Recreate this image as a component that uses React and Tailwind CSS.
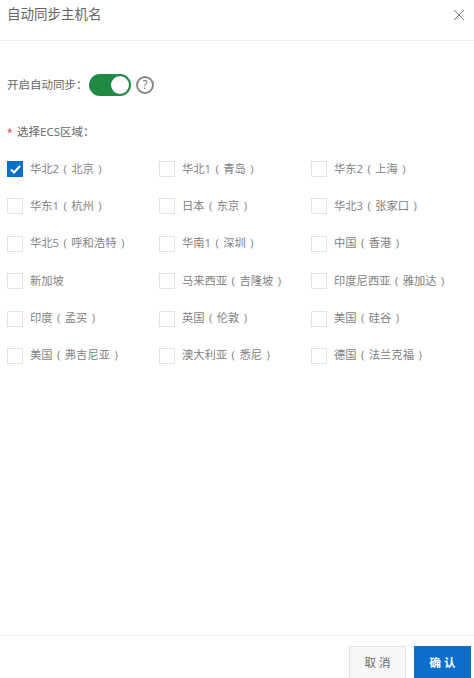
const regions = [
  "华北2 ( 北京 )", "华北1 ( 青岛 )", "华东2 ( 上海 )",
  "华东1 ( 杭州 )", "日本 ( 东京 )", "华北3 ( 张家口 )",
  "华北5 ( 呼和浩特 )", "华南1 ( 深圳 )", "中国 ( 香港 )",
  "新加坡", "马来西亚 ( 吉隆坡 )", "印度尼西亚 ( 雅加达 )",
  "印度 ( 孟买 )", "英国 ( 伦敦 )", "美国 ( 硅谷 )",
  "美国 ( 弗吉尼亚 )", "澳大利亚 ( 悉尼 )", "德国 ( 法兰克福 )",
];

const App = () => {
  return (
    <div className="flex flex-col w-[474px] h-[678px] overflow-hidden bg-white font-['Open_Sans','Noto_Sans_CJK_SC',sans-serif]">
      <div className="flex items-center justify-between h-[41px] shrink-0 pb-[11px] pl-[7px] pr-[10px] border-b border-[#eeeeee]">
        <h1 className="text-[13.5px] leading-none text-[#666666]">自动同步主机名</h1>
        <svg width="10" height="10" viewBox="0 0 10 10" fill="none" stroke="#777777" strokeWidth="1">
          <path d="M0 0l10 10M10 0L0 10" />
        </svg>
      </div>

      <div className="flex-1 pl-[7px] pt-[33px]">
        <div className="flex items-center h-[22px]">
          <span className="w-[82px] text-[11.5px] text-[#666666]">开启自动同步：</span>
          <div className="flex items-center justify-end w-[42px] h-[22px] p-[2px] rounded-full bg-[#1f8a43]">
            <div className="w-[18px] h-[18px] rounded-full bg-white" />
          </div>
          <div className="flex items-center justify-center w-[18px] h-[18px] ml-[5px] rounded-full border-[2px] border-[#888888] text-[12px] leading-none text-[#777777]">
            ?
          </div>
        </div>

        <div className="flex items-center mt-[28px] h-[16px] text-[11.5px] text-[#666666]">
          <span className="w-[10px] text-[10px] text-[#d9363e]">*</span>
          <span>选择ECS区域：</span>
        </div>

        <div className="grid grid-cols-[152px_152px_152px] auto-rows-[37.4px] mt-[21px]">
          {regions.map((name, i) => (
            <label key={name} className="flex items-center h-[16px] text-[11.3px] [word-spacing:1.5px] text-[#808080]">
              {i === 0 ? (
                <span className="flex items-center justify-center w-[16px] h-[16px] bg-[#0b6fc9]">
                  <svg width="11" height="9" viewBox="0 0 11 9" fill="none" stroke="white" strokeWidth="2">
                    <path d="M1 4.5l3 3 6-6.5" />
                  </svg>
                </span>
              ) : (
                <span className="w-[16px] h-[16px] border border-[#e3e3e3] bg-white" />
              )}
              <span className="ml-[7px] whitespace-nowrap">{name}</span>
            </label>
          ))}
        </div>
      </div>

      <div className="flex justify-end gap-2 shrink-0 h-[43px] pt-[10px] pr-[3px] border-t border-[#eeeeee]">
        <button className="w-[57px] h-[33px] border border-[#e3e3e3] bg-[#f7f7f7] text-[11.5px] text-[#666666]">取 消</button>
        <button className="w-[57px] h-[33px] bg-[#0b6fc9] text-[11.5px] font-bold text-white">确 认</button>
      </div>
    </div>
  );
};

export default App;
